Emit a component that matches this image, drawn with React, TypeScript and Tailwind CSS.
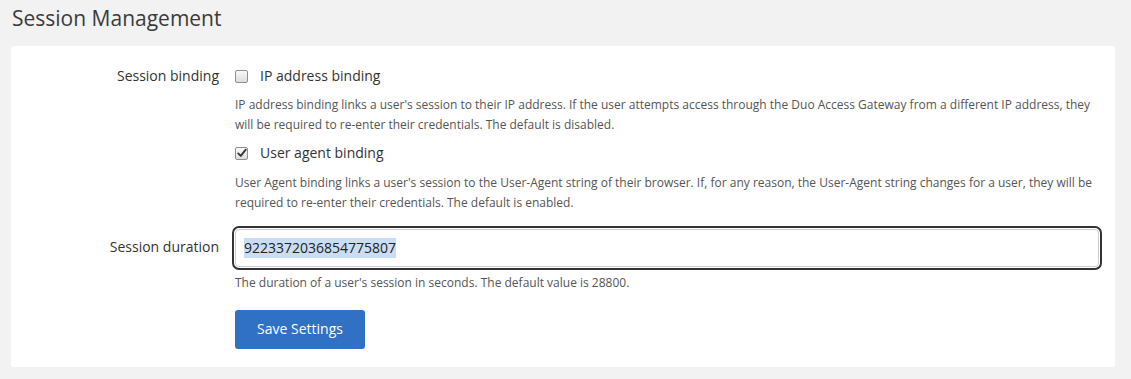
import * as React from "react";

function Checkbox({ checked }: { checked: boolean }) {
  return (
    <span className="flex h-[13px] w-[13px] shrink-0 items-center justify-center rounded-[2px] border border-[#8f8f8f] bg-gradient-to-b from-[#fafafa] to-[#dcdcdc]">
      {checked && (
        <svg viewBox="0 0 12 12" className="h-[10px] w-[10px]">
          <path d="M1.5 6.5 L4.5 9.5 L10.5 2" fill="none" stroke="#333" strokeWidth="2.2" strokeLinecap="round" strokeLinejoin="round" />
        </svg>
      )}
    </span>
  );
}

export default function App() {
  return (
    <div className="min-h-[379px] bg-[#f2f2f2] px-[11px] pb-3 text-[#333] [font-family:'Open_Sans',sans-serif]">
      <h1 className="pl-[1px] pt-[3px] text-[21px] leading-[30px] font-normal text-[#3a3a3a]">
        Session Management
      </h1>

      <div className="mt-[13px] w-[1104px] rounded-[3px] bg-white pb-[18px] pl-[15px] pr-[16px] pt-5">
        {/* Session binding */}
        <div className="flex gap-4">
          <div className="w-[193px] shrink-0 text-right text-[14px] leading-5">Session binding</div>
          <div className="flex-1">
            <label className="flex h-5 items-center">
              <Checkbox checked={false} />
              <span className="ml-[12px] text-[14px] leading-5">IP address binding</span>
            </label>
            <p className="mt-[9px] text-[12px] leading-5 text-[#555]">
              IP address binding links a user's session to their IP address. If the user attempts access through the Duo Access Gateway from a different IP address, they will be required to re-enter their credentials. The default is disabled.
            </p>
            <label className="mt-2 flex h-5 items-center">
              <Checkbox checked={true} />
              <span className="ml-[12px] text-[14px] leading-5">User agent binding</span>
            </label>
            <p className="mt-[10px] text-[12px] leading-5 text-[#555]">
              User Agent binding links a user's session to the User-Agent string of their browser. If, for any reason, the User-Agent string changes for a user, they will be required to re-enter their credentials. The default is enabled.
            </p>
          </div>
        </div>

        {/* Session duration */}
        <div className="mt-4 flex gap-4">
          <div className="w-[193px] shrink-0 pt-[8px] text-right text-[14px] leading-5">Session duration</div>
          <div className="flex-1">
            <div className="flex h-[38px] items-center rounded-[4px] border border-[#ccc] px-[8px] outline-2 outline-offset-1 outline-[#333] outline">
              <span className="bg-[#c9def5] text-[14px] leading-5 text-[#222]">9223372036854775807</span>
            </div>
            <p className="mt-[6px] text-[12px] leading-5 text-[#555]">
              The duration of a user's session in seconds. The default value is 28800.
            </p>
            <button className="mt-[17px] h-[39px] w-[130px] rounded-[3px] bg-[#3071c5] pb-[2px] text-[14px] text-white">
              Save Settings
            </button>
          </div>
        </div>
      </div>
    </div>
  );
}
